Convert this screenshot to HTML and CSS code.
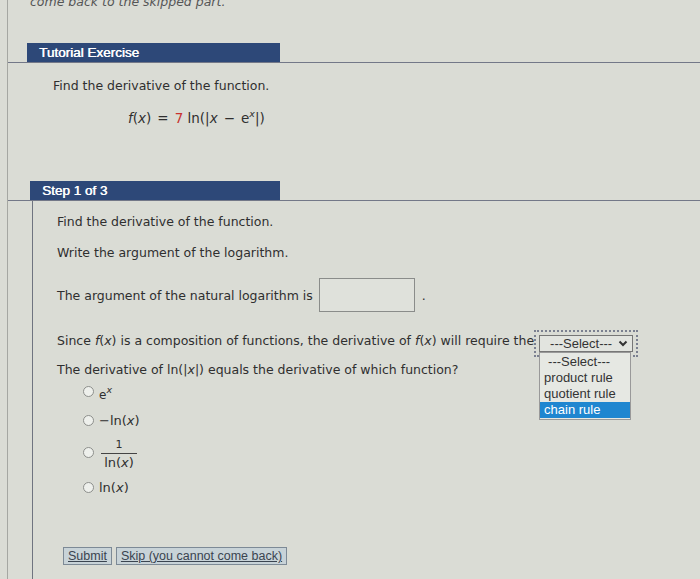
FILE: index.html
```html
<!DOCTYPE html>
<html lang="en">
<head>
    <meta charset="UTF-8">
    <title>Tutorial Exercise</title>
    <link rel="stylesheet" href="styles.css">
</head>
<body>
<div class="frame">
    <p class="skipped">come back to the skipped part.</p>

    <div class="head">
        <span class="tab">Tutorial Exercise</span>
    </div>
    <div class="intro">
        <p>Find the derivative of the function.</p>
        <p class="math fx"><i>f</i>(<i>x</i>)<span class="op">=</span><span class="red">7</span> ln(|<i>x</i><span class="op">&minus;</span>e<sup><i>x</i></sup>|)</p>
    </div>

    <div class="head step-head">
        <span class="tab">Step 1 of 3</span>
    </div>
    <div class="step">
        <p>Find the derivative of the function.</p>
        <p class="gap1">Write the argument of the logarithm.</p>
        <p class="gap2 arg">The argument of the natural logarithm is <span class="answer"></span> <span class="dot">.</span></p>
        <p class="gap3 since">Since <i>f</i>(<i>x</i>) is a composition of functions, the derivative of <i>f</i>(<i>x</i>) will require the<span class="select-wrap">
                <span class="select">---Select---
                    <svg class="chev" width="10" height="7" viewBox="0 0 10 7"><path d="M1.5 1.5 L5 5 L8.5 1.5" fill="none" stroke="#333" stroke-width="2"/></svg>
                </span>
                <span class="list">
                    <span class="opt">---Select---</span>
                    <span class="opt left">product rule</span>
                    <span class="opt left">quotient rule</span>
                    <span class="opt left on">chain rule</span>
                </span>
            </span>
        </p>
        <p class="gap4">The derivative of ln(|<i>x</i>|) equals the derivative of which function?</p>
        <ul class="choices">
            <li class="first"><span class="radio"></span><span class="math ex">e<sup><i>x</i></sup></span></li>
            <li><span class="radio"></span><span class="math">&minus;ln(<i>x</i>)</span></li>
            <li class="frac-row"><span class="radio"></span><span class="math frac"><span class="num">1</span><span class="den">ln(<i>x</i>)</span></span></li>
            <li class="last"><span class="radio"></span><span class="math">ln(<i>x</i>)</span></li>
        </ul>
        <div class="buttons">
            <span class="btn">Submit</span>
            <span class="btn">Skip (you cannot come back)</span>
        </div>
    </div>
</div>
</body>
</html>
```

FILE: styles.css
```css
*{
    margin: 0;
    padding: 0;
}
html, body{
    height: 100%;
}
body{
    background-color: #dadcd5;
    font-family: "DejaVu Sans", Verdana, sans-serif;
    font-size: 12.5px;
    line-height: 15px;
    color: #2f2f2f;
    overflow: hidden;
}
.frame{
    margin-left: 7px;
    height: 100%;
    display: flex;
    flex-direction: column;
    border-left: 1px solid #a5a7a2;
}
.skipped{
    margin-top: -6px;
    height: 49px;
    flex-shrink: 0;
    padding-left: 22px;
    font-style: italic;
    font-size: 12.5px;
    color: #555;
}
.head{
    border-bottom: 1px solid #737888;
    padding-left: 19px;
    line-height: 19px;
}
.tab{
    display: inline-block;
    width: 241px;
    padding-left: 12px;
    background-color: #2d4878;
    color: #fff;
    font-family: "Liberation Sans", Arial, sans-serif;
    font-size: 13.5px;
    text-shadow: 0.4px 0 0 #fff;
    vertical-align: bottom;
}
.intro{
    padding: 15px 0 0 45px;
    height: 103px;
    flex-shrink: 0;
}
.math{
    font-family: "DejaVu Sans", Verdana, sans-serif;
    font-size: 13px;
}
.fx{
    margin: 18px 0 0 75px;
    font-size: 13.5px;
}
.op{
    padding: 0 6px;
}
.red{
    color: #c8322e;
}
sup{
    font-size: 9.5px;
    vertical-align: 6px;
    line-height: 0;
}
.step-head{
    padding-left: 22px;
}
.step-head .tab{
    width: 238px;
}
.step{
    flex: 1;
    margin-left: 24px;
    border-left: 1px solid #6f7480;
    padding: 13px 0 0 24px;
}
.gap1{ margin-top: 16px; }
.gap2{ margin-top: 18px; }
.gap3{ margin-top: 21px; }
.gap4{ margin-top: 14px; }
.arg{
    display: flex;
    align-items: center;
}
.answer{
    display: inline-block;
    width: 94px;
    height: 32px;
    margin-left: 6px;
    border: 1px solid #8a8c8a;
    background: #dfe1db;
}
.dot{
    margin-left: 7px;
}
.since{
    white-space: nowrap;
    height: 15px;
}
.select-wrap{
    position: relative;
    display: inline-block;
    margin-left: 5px;
    vertical-align: -3px;
    outline: 2px dotted #7b8090;
    outline-offset: 3px;
}
.select{
    display: inline-block;
    width: 82px;
    height: 15px;
    padding-left: 10px;
    border: 1px solid #777;
    background: #e2e4df;
    font-family: "Liberation Sans", Arial, sans-serif;
    font-size: 13px;
    line-height: 15px;
    color: #333;
    position: relative;
}
.chev{
    position: absolute;
    right: 4px;
    top: 4px;
}
.list{
    position: absolute;
    left: 0;
    top: 17px;
    width: 90px;
    padding: 1px 0;
    border: 1px solid #999;
    background: #e6e8e3;
    font-family: "Liberation Sans", Arial, sans-serif;
    font-size: 13px;
    line-height: 16px;
    color: #333;
    z-index: 2;
}
.opt{
    display: block;
    padding-left: 8px;
}
.opt.left{
    padding-left: 4px;
}
.opt.on{
    background: #1f86d0;
    color: #fff;
}
.choices{
    list-style: none;
    margin: 0 0 0 26px;
}
.choices li{
    display: flex;
    align-items: center;
    height: 31px;
}
.choices li.first{
    height: 28px;
}
.choices li.frac-row{
    height: 36px;
}
.choices li.last{
    height: 30px;
}
.radio{
    display: inline-block;
    width: 9px;
    height: 9px;
    border: 1px solid #8d8f8c;
    border-radius: 50%;
    background: #eef0ec;
    margin-right: 5px;
}
.ex{
    margin-top: 9px;
    font-size: 12px;
}
.frac-row .radio{
    margin-top: -4px;
    margin-right: 7px;
}
.frac{
    display: inline-flex;
    flex-direction: column;
    align-items: center;
}
.num{
    font-size: 11px;
    line-height: 16px;
    border-bottom: 1px solid #444;
    width: 36px;
    text-align: center;
}
.den{
    line-height: 17px;
}
.buttons{
    margin: 45px 0 0 6px;
    display: flex;
    gap: 4px;
}
.btn{
    display: inline-block;
    padding: 0 4px;
    line-height: 16px;
    border: 1px solid #7d8a96;
    background: #c8d3d8;
    font-family: "Liberation Sans", Arial, sans-serif;
    font-size: 12.5px;
    color: #3a4450;
    text-decoration: underline;
}
```
